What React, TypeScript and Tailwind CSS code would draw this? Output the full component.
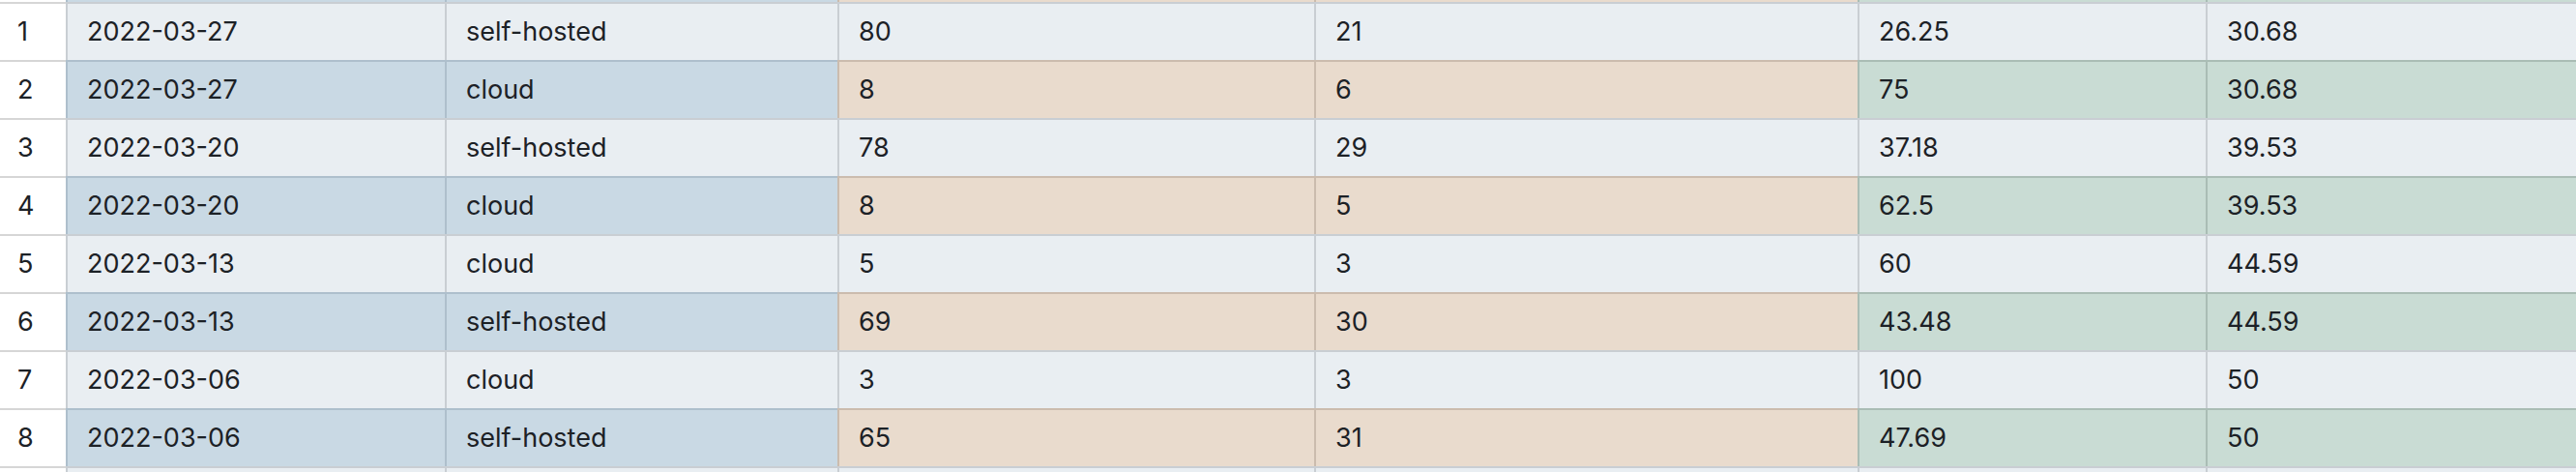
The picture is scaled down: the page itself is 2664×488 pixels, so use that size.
const ROWS = [
  ['2022-03-27', 'self-hosted', '80', '21', '26.25', '30.68'],
  ['2022-03-27', 'cloud', '8', '6', '75', '30.68'],
  ['2022-03-20', 'self-hosted', '78', '29', '37.18', '39.53'],
  ['2022-03-20', 'cloud', '8', '5', '62.5', '39.53'],
  ['2022-03-13', 'cloud', '5', '3', '60', '44.59'],
  ['2022-03-13', 'self-hosted', '69', '30', '43.48', '44.59'],
  ['2022-03-06', 'cloud', '3', '3', '100', '50'],
  ['2022-03-06', 'self-hosted', '65', '31', '47.69', '50'],
];

const WIDTHS = ['w-[392px]', 'w-[406px]', 'w-[493px]', 'w-[562px]', 'w-[360px]', 'flex-1'];

// cell styles for the shaded (even) rows, per column group
const SHADED = [
  'bg-[#c9d9e4] border-[#aebfcc]',
  'bg-[#c9d9e4] border-[#aebfcc]',
  'bg-[#e9dbcd] border-[#cbbcae]',
  'bg-[#e9dbcd] border-[#cbbcae]',
  'bg-[#c9dcd4] border-[#aabdb5]',
  'bg-[#c9dcd4] border-[#aabdb5]',
];

const PLAIN = 'bg-[#e9eef2] border-[#c9ced3]';

function Row({ index, cells, shaded }: { index: number | null; cells: string[]; shaded: boolean }) {
  return (
    <div className="flex h-[60px] shrink-0">
      <div className="w-[68px] shrink-0 bg-white border-t-2 border-[#d6d6d6] flex items-center pl-[18px]">
        {index}
      </div>
      {cells.map((c, i) => (
        <div
          key={i}
          className={`${WIDTHS[i]} shrink-0 border-t-2 border-l-2 flex items-center px-[20px] ${
            shaded ? SHADED[i] : PLAIN
          }`}
        >
          {c}
        </div>
      ))}
    </div>
  );
}

export default function App() {
  return (
    <div
      className="w-[2664px] h-[488px] overflow-hidden bg-white text-[27px] text-[#1c2126]"
      style={{ fontFamily: 'Inter, "Noto Sans", sans-serif' }}
    >
      {/* sliver of the shaded row above row 1 */}
      <div className="flex h-[2px]">
        <div className="w-[68px] shrink-0 bg-white" />
        {SHADED.map((s, i) => (
          <div key={i} className={`${WIDTHS[i]} shrink-0 border-l-2 ${s}`} />
        ))}
      </div>
      {ROWS.map((r, i) => (
        <Row key={i} index={i + 1} cells={r} shaded={i % 2 === 1} />
      ))}
      <Row index={null} cells={['', '', '', '', '', '']} shaded={false} />
    </div>
  );
}
